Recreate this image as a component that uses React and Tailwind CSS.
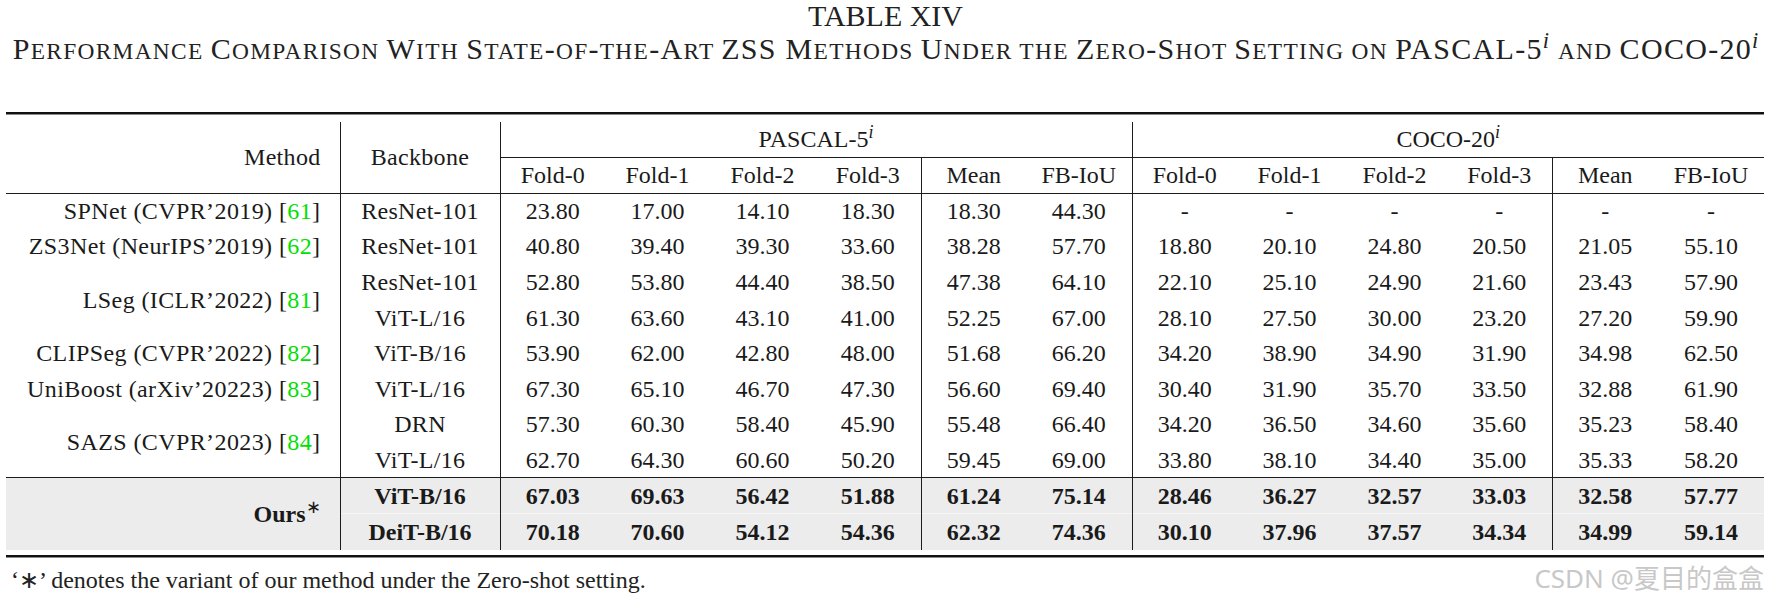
import React from 'react';

const groups = [
  {
    method: 'SPNet (CVPR’2019)',
    cite: '61',
    rows: [
      { backbone: 'ResNet-101', pascal: ['23.80', '17.00', '14.10', '18.30', '18.30', '44.30'], coco: ['-', '-', '-', '-', '-', '-'] },
    ],
  },
  {
    method: 'ZS3Net (NeurIPS’2019)',
    cite: '62',
    rows: [
      { backbone: 'ResNet-101', pascal: ['40.80', '39.40', '39.30', '33.60', '38.28', '57.70'], coco: ['18.80', '20.10', '24.80', '20.50', '21.05', '55.10'] },
    ],
  },
  {
    method: 'LSeg (ICLR’2022)',
    cite: '81',
    rows: [
      { backbone: 'ResNet-101', pascal: ['52.80', '53.80', '44.40', '38.50', '47.38', '64.10'], coco: ['22.10', '25.10', '24.90', '21.60', '23.43', '57.90'] },
      { backbone: 'ViT-L/16', pascal: ['61.30', '63.60', '43.10', '41.00', '52.25', '67.00'], coco: ['28.10', '27.50', '30.00', '23.20', '27.20', '59.90'] },
    ],
  },
  {
    method: 'CLIPSeg (CVPR’2022)',
    cite: '82',
    rows: [
      { backbone: 'ViT-B/16', pascal: ['53.90', '62.00', '42.80', '48.00', '51.68', '66.20'], coco: ['34.20', '38.90', '34.90', '31.90', '34.98', '62.50'] },
    ],
  },
  {
    method: 'UniBoost (arXiv’20223)',
    cite: '83',
    rows: [
      { backbone: 'ViT-L/16', pascal: ['67.30', '65.10', '46.70', '47.30', '56.60', '69.40'], coco: ['30.40', '31.90', '35.70', '33.50', '32.88', '61.90'] },
    ],
  },
  {
    method: 'SAZS (CVPR’2023)',
    cite: '84',
    rows: [
      { backbone: 'DRN', pascal: ['57.30', '60.30', '58.40', '45.90', '55.48', '66.40'], coco: ['34.20', '36.50', '34.60', '35.60', '35.23', '58.40'] },
      { backbone: 'ViT-L/16', pascal: ['62.70', '64.30', '60.60', '50.20', '59.45', '69.00'], coco: ['33.80', '38.10', '34.40', '35.00', '35.33', '58.20'] },
    ],
  },
];

const ours = [
  { backbone: 'ViT-B/16', pascal: ['67.03', '69.63', '56.42', '51.88', '61.24', '75.14'], coco: ['28.46', '36.27', '32.57', '33.03', '32.58', '57.77'] },
  { backbone: 'DeiT-B/16', pascal: ['70.18', '70.60', '54.12', '54.36', '62.32', '74.36'], coco: ['30.10', '37.96', '37.57', '34.34', '34.99', '59.14'] },
];

const foldHeads = ['Fold-0', 'Fold-1', 'Fold-2', 'Fold-3', 'Mean', 'FB-IoU'];

// LaTeX-style small caps: lower case letters become smaller capitals
const SmallCaps = ({ text }) => {
  const parts = [];
  let buf = '';
  let lower = null;
  const flush = () => {
    if (!buf) return;
    parts.push(
      lower ? (
        <span key={parts.length} className="text-[0.78em]">{buf.toUpperCase()}</span>
      ) : (
        <span key={parts.length}>{buf}</span>
      )
    );
    buf = '';
  };
  for (const ch of text) {
    const isLower = ch !== ch.toUpperCase();
    if (lower !== null && isLower !== lower && ch !== ' ') flush();
    if (ch !== ' ') lower = isLower;
    buf += ch;
  }
  flush();
  return <>{parts}</>;
};

// Fold-3 always, and FB-IoU of PASCAL, carry a right rule
const cellBorder = (i, set) => {
  if (i === 3) return 'border-r border-[#1c1c1c]';
  if (i === 5 && set === 'pascal') return 'border-r border-[#1c1c1c]';
  return '';
};

const Values = ({ row, bold }) => (
  <>
    {row.pascal.map((v, i) => (
      <td key={`p${i}`} className={`p-0 text-center ${bold ? 'font-bold' : ''} ${cellBorder(i, 'pascal')}`}>
        {v}
      </td>
    ))}
    {row.coco.map((v, i) => (
      <td key={`c${i}`} className={`p-0 text-center ${bold ? 'font-bold' : ''} ${cellBorder(i, 'coco')}`}>
        {v}
      </td>
    ))}
  </>
);

const Rule = () => (
  <div className="ml-[6px] w-[1758px]">
    <div className="h-[2px] bg-[#111]" />
    <div className="h-px bg-[#8a8a8a]" />
  </div>
);

export default function App() {
  return (
    <div className="relative w-[1771px] h-[595px] bg-white text-[#1a1a1a] font-['Liberation_Serif','Times_New_Roman',serif]">
      {/* Caption */}
      <div className="text-center text-[30px] leading-[32px] text-[#222]">TABLE XIV</div>
      <div className="h-[34px] text-center text-[30px] leading-[34px] text-[#222] tracking-[1.3px] whitespace-nowrap">
        <SmallCaps text="Performance Comparison With State-of-the-Art ZSS Methods Under the Zero-Shot Setting on PASCAL-5" />
        <sup className="italic tracking-normal">i</sup>{' '}
        <SmallCaps text="and COCO-20" />
        <sup className="italic tracking-normal">i</sup>
      </div>

      <div className="mt-[46px]">
        <Rule />
      </div>

      <table className="ml-[6px] w-[1758px] table-fixed border-collapse text-[24px] leading-none">
        <colgroup>
          <col className="w-[334px]" />
          <col className="w-[160px]" />
          <col className="w-[105px]" />
          <col className="w-[105px]" />
          <col className="w-[105px]" />
          <col className="w-[106px]" />
          <col className="w-[105px]" />
          <col className="w-[106px]" />
          <col className="w-[105px]" />
          <col className="w-[105px]" />
          <col className="w-[105px]" />
          <col className="w-[105px]" />
          <col className="w-[106px]" />
          <col className="w-[106px]" />
        </colgroup>
        <thead>
          <tr className="h-[7px]">
            <th colSpan={14} className="p-0" />
          </tr>
          <tr className="h-[35px]">
            <th rowSpan={2} className="p-0 pr-[19px] text-right font-normal tracking-[0.3px] border-b border-[#1c1c1c]">
              Method
            </th>
            <th rowSpan={2} className="p-0 text-center font-normal tracking-[0.3px] border-x border-b border-[#1c1c1c]">
              Backbone
            </th>
            <th colSpan={6} className="p-0 text-center font-normal border-r border-b border-[#1c1c1c]">
              PASCAL-5<sup className="italic">i</sup>
            </th>
            <th colSpan={6} className="p-0 text-center font-normal border-b border-[#1c1c1c]">
              COCO-20<sup className="italic">i</sup>
            </th>
          </tr>
          <tr className="h-[36px]">
            {foldHeads.map((h, i) => (
              <th key={`ph${i}`} className={`p-0 text-center font-normal border-b border-[#1c1c1c] ${cellBorder(i, 'pascal')}`}>
                {h}
              </th>
            ))}
            {foldHeads.map((h, i) => (
              <th key={`ch${i}`} className={`p-0 text-center font-normal border-b border-[#1c1c1c] ${cellBorder(i, 'coco')}`}>
                {h}
              </th>
            ))}
          </tr>
        </thead>
        <tbody>
          {groups.map((g) =>
            g.rows.map((row, ri) => (
              <tr key={g.method + ri} className="h-[35.6px]">
                {ri === 0 && (
                  <td rowSpan={g.rows.length} className="p-0 pr-[19px] text-right whitespace-nowrap tracking-[0.4px]">
                    {g.method} [<span className="text-[#00e000]">{g.cite}</span>]
                  </td>
                )}
                <td className="p-0 text-center tracking-[0.3px] border-x border-[#1c1c1c]">{row.backbone}</td>
                <Values row={row} />
              </tr>
            ))
          )}
          {ours.map((row, ri) => (
            <tr
              key={row.backbone}
              className={`h-[36px] bg-[#ececec] ${ri === 0 ? 'border-t border-[#1c1c1c]' : 'border-t border-[#f5f5f5]'}`}
            >
              {ri === 0 && (
                <td rowSpan={2} className="p-0 pr-[19px] text-right font-bold">
                  Ours<sup className="font-normal">∗</sup>
                </td>
              )}
              <td className="p-0 text-center font-bold border-x border-[#1c1c1c]">{row.backbone}</td>
              <Values row={row} bold />
            </tr>
          ))}
          <tr className="h-[5px]">
            <td colSpan={14} className="p-0" />
          </tr>
        </tbody>
      </table>

      <Rule />

      {/* Footnote */}
      <div className="mt-[9px] ml-[11px] text-[24px] leading-[26px] text-[#222]">
        ‘∗’ denotes the variant of our method under the Zero-shot setting.
      </div>

      {/* Watermark */}
      <div className="absolute right-[7px] top-[564px] text-[26px] leading-[28px] text-[#c8c8c8] whitespace-nowrap font-['Noto_Sans','Noto_Sans_CJK_SC',sans-serif] [text-shadow:0_0_2px_#fff]">
        CSDN @夏目的盒盒
      </div>
    </div>
  );
}
